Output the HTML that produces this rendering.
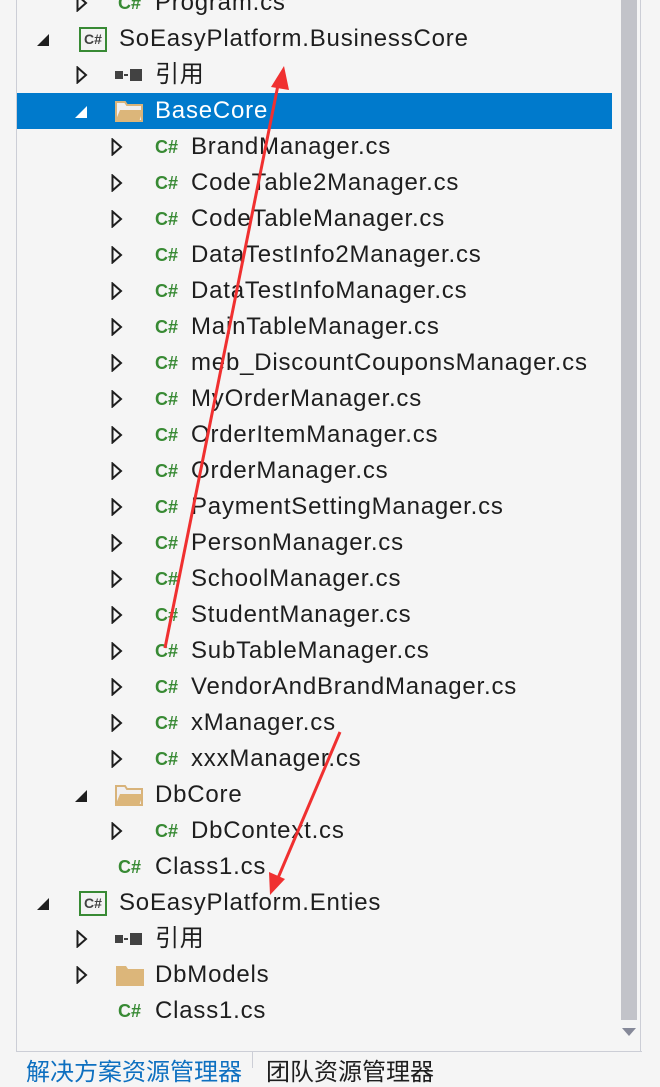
<!DOCTYPE html>
<html><head><meta charset="utf-8"><style>
*{margin:0;padding:0;box-sizing:border-box}
body{width:660px;height:1068px;overflow:hidden;background:#f5f5f5;position:relative;font-family:"Liberation Sans","Noto Sans CJK SC",sans-serif;color:#1e1e1e}
.r{position:absolute;left:0;width:612px;height:36px}
.t{position:absolute;top:4px;font-size:24px;letter-spacing:0.8px;line-height:28px;white-space:nowrap}
.i{position:absolute}
.cs{position:absolute;top:8px;font-size:18px;font-weight:bold;color:#388a34;line-height:20px}
</style></head><body>
<div style="position:absolute;left:16px;top:0;width:1px;height:1052px;background:#ccced6"></div>
<div style="position:absolute;left:16px;top:1051px;width:625px;height:1px;background:#ccced6"></div>
<div style="position:absolute;left:640px;top:0;width:1px;height:1052px;background:#ccced6"></div>
<div style="position:absolute;left:621px;top:0;width:16px;height:1020px;background:#c2c3c9"></div>
<svg style="position:absolute;left:620px;top:1026px" width="18" height="12"><path d="M2 2h14l-7 8z" fill="#868999"/></svg>
<div style="position:absolute;left:252px;top:1051px;width:390px;height:17px;border-left:1px solid #ccced6;border-top:1px solid #ccced6;background:#f5f5f5"></div>
<div style="position:absolute;left:26px;top:1059px;font-size:24px;line-height:28px;color:#0e70c0">解决方案资源管理器</div>
<div style="position:absolute;left:266px;top:1059px;font-size:24px;line-height:28px;color:#1e1e1e">团队资源管理器</div>
<div style="position:absolute;left:17px;top:93px;width:595px;height:36px;background:#007acc"></div>
<div id="tree"></div>
<svg style="position:absolute;left:0;top:0" width="660" height="1068">
<line x1="165" y1="648" x2="278" y2="85" stroke="#f03030" stroke-width="3"/>
<path d="M284 66 L289 90 L271 87 Z" fill="#f03030"/>
<line x1="340" y1="732" x2="278" y2="878" stroke="#f03030" stroke-width="3"/>
<path d="M270 895 L269 872 L285 879 Z" fill="#f03030"/>
</svg>
<script>
var rows=[
['f1','Program.cs'],['p','SoEasyPlatform.BusinessCore'],['ref','引用'],['sel','BaseCore'],
['f2','BrandManager.cs'],['f2','CodeTable2Manager.cs'],['f2','CodeTableManager.cs'],['f2','DataTestInfo2Manager.cs'],['f2','DataTestInfoManager.cs'],['f2','MainTableManager.cs'],['f2','meb_DiscountCouponsManager.cs'],['f2','MyOrderManager.cs'],['f2','OrderItemManager.cs'],['f2','OrderManager.cs'],['f2','PaymentSettingManager.cs'],['f2','PersonManager.cs'],['f2','SchoolManager.cs'],['f2','StudentManager.cs'],['f2','SubTableManager.cs'],['f2','VendorAndBrandManager.cs'],['f2','xManager.cs'],['f2','xxxManager.cs'],
['dbc','DbCore'],['f2','DbContext.cs'],['c1','Class1.cs'],['p','SoEasyPlatform.Enties'],['ref','引用'],['dbm','DbModels'],['c1','Class1.cs']];
var h='';
function hol(x){return '<svg class="i" style="left:'+x+'px;top:9px" width="12" height="18"><path d="M1.5 1.5 L10 9 L1.5 16.5 Z" fill="none" stroke="#1e1e1e" stroke-width="2"/></svg>';}
function sol(x,c){return '<svg class="i" style="left:'+x+'px;top:12px" width="14" height="14"><path d="M13 1 L13 13 L1 13 Z" fill="'+c+'"/></svg>';}
function cs(x){return '<span class="cs" style="left:'+x+'px">C#</span>';}
function fold(x,open){return open?'<svg class="i" style="left:'+x+'px;top:5px" width="32" height="26"><path d="M3 4h9l2 3h15v16H3z" fill="#f0eff1" stroke="#d8b37a" stroke-width="2"/><path d="M2 24 L7 12 H30 L26 24 Z" fill="#dcb67a"/></svg>':'<svg class="i" style="left:'+x+'px;top:6px" width="32" height="24"><path d="M2 3h10l2 3h16v17H2z" fill="#dcb67a"/></svg>';}
rows.forEach(function(r,i){
 var y=3+36*i-18,k=r[0],s='';
 if(k=='f1'){s=hol(76)+cs(118)+'<span class="t" style="left:155px">'+r[1]+'</span>';}
 if(k=='p'){s=sol(36,'#1e1e1e')+'<div class="i" style="left:79px;top:6px;width:28px;height:25px;border:2px solid #388a34;background:#f3f3f3;font-size:14px;font-weight:bold;color:#424242;text-align:center;line-height:21px">C#</div><span class="t" style="left:119px">'+r[1]+'</span>';}
 if(k=='ref'){s=hol(76)+'<div class="i" style="left:115px;top:14px;width:8px;height:8px;background:#424242"></div><div class="i" style="left:124px;top:17px;width:4px;height:2px;background:#424242"></div><div class="i" style="left:130px;top:12px;width:12px;height:12px;background:#424242"></div><span class="t" style="left:155px">'+r[1]+'</span>';}
 if(k=='sel'){s=sol(74,'#fff')+fold(113,1)+'<span class="t" style="left:155px;color:#fff">'+r[1]+'</span>';}
 if(k=='f2'){s=hol(111)+cs(155)+'<span class="t" style="left:191px">'+r[1]+'</span>';}
 if(k=='dbc'){s=sol(74,'#1e1e1e')+fold(113,1)+'<span class="t" style="left:155px">'+r[1]+'</span>';}
 if(k=='c1'){s=cs(118)+'<span class="t" style="left:155px">'+r[1]+'</span>';}
 if(k=='dbm'){s=hol(76)+fold(114,0)+'<span class="t" style="left:155px">'+r[1]+'</span>';}
 h+='<div class="r" style="top:'+y+'px">'+s+'</div>';
});
document.getElementById('tree').innerHTML=h;
</script>
</body></html>
